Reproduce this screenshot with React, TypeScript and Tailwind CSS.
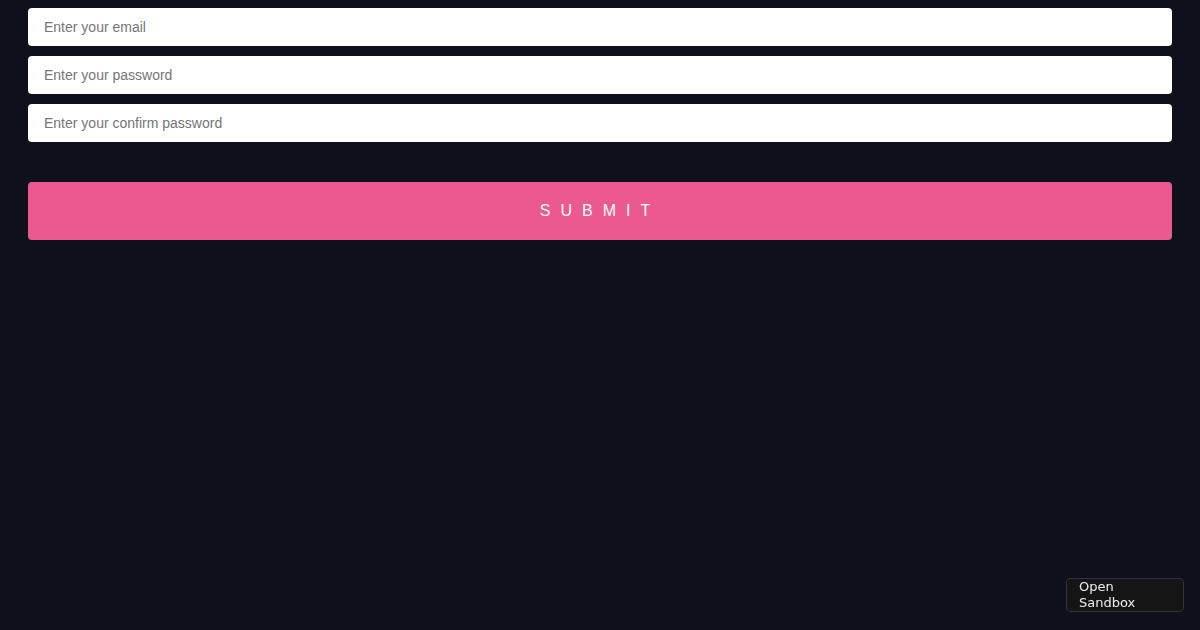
import React from "react";

export default function App() {
  return (
    <div className="min-h-screen w-full bg-[#0e101c] px-[28px] pt-[8px] font-['Liberation_Sans',Arial,sans-serif]">
      <form className="flex flex-col" onSubmit={(e) => e.preventDefault()}>
        <div className="flex flex-col gap-[10px]">
          <input
            type="email"
            placeholder="Enter your email"
            className="block h-[38px] w-full rounded-[4px] border-0 bg-white px-[16px] text-[14px] text-black outline-none placeholder:text-[#757575]"
          />
          <input
            type="password"
            placeholder="Enter your password"
            className="block h-[38px] w-full rounded-[4px] border-0 bg-white px-[16px] text-[14px] text-black outline-none placeholder:text-[#757575]"
          />
          <input
            type="password"
            placeholder="Enter your confirm password"
            className="block h-[38px] w-full rounded-[4px] border-0 bg-white px-[16px] text-[14px] text-black outline-none placeholder:text-[#757575]"
          />
        </div>
        <button
          type="submit"
          className="mt-[40px] h-[58px] w-full rounded-[4px] bg-[#ec5990] text-[16px] uppercase tracking-[10px] text-white"
        >
          Submit
        </button>
      </form>

      <button
        type="button"
        className="fixed bottom-[18px] right-[16px] h-[34px] w-[118px] rounded-[4px] border border-[#333] bg-[#151515] px-[12px] text-left text-[13px] leading-[16px] text-[#eee] font-['DejaVu_Sans',sans-serif]"
      >
        Open Sandbox
      </button>
    </div>
  );
}
